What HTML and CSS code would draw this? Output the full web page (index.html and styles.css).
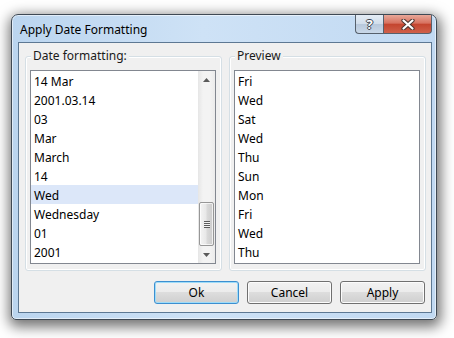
FILE: index.html
```html
<!DOCTYPE html>
<html lang="en">

<head>
    <meta charset="UTF-8">
    <meta name="viewport" content="width=device-width, initial-scale=1.0">
    <title>Apply Date Formatting</title>
    <link rel="stylesheet" href="styles.css">
</head>

<body>
    <div class="window">
        <div class="titlebar">
            <span class="title">Apply Date Formatting</span>
            <div class="caption-buttons">
                <div class="cap-btn help-btn">?</div>
                <div class="cap-btn close-btn">
                    <svg width="14" height="11" viewBox="0 0 14 11">
                        <path d="M2.5 1.5 L11.5 9.5 M11.5 1.5 L2.5 9.5" stroke="#4a3530" stroke-width="4.2" stroke-linecap="round" fill="none"/>
                        <path d="M2.5 1.5 L11.5 9.5 M11.5 1.5 L2.5 9.5" stroke="#ffffff" stroke-width="2.2" stroke-linecap="round" fill="none"/>
                    </svg>
                </div>
            </div>
        </div>

        <div class="client">
            <div class="groups">
                <fieldset class="group">
                    <legend>Date formatting:</legend>
                    <div class="listbox">
                        <ul class="rows">
                            <li>14 Mar</li>
                            <li>2001.03.14</li>
                            <li>03</li>
                            <li>Mar</li>
                            <li>March</li>
                            <li>14</li>
                            <li class="selected">Wed</li>
                            <li>Wednesday</li>
                            <li>01</li>
                            <li>2001</li>
                        </ul>
                        <div class="scrollbar">
                            <div class="arrow">
                                <svg width="7" height="4" viewBox="0 0 7 4"><path d="M0 4 L3.5 0 L7 4 Z" fill="#5a5a5a"/></svg>
                            </div>
                            <div class="track">
                                <div class="thumb">
                                    <div class="grip"></div>
                                </div>
                            </div>
                            <div class="arrow">
                                <svg width="7" height="4" viewBox="0 0 7 4"><path d="M0 0 L7 0 L3.5 4 Z" fill="#5a5a5a"/></svg>
                            </div>
                        </div>
                    </div>
                </fieldset>

                <fieldset class="group">
                    <legend>Preview</legend>
                    <div class="listbox">
                        <ul class="rows">
                            <li>Fri</li>
                            <li>Wed</li>
                            <li>Sat</li>
                            <li>Wed</li>
                            <li>Thu</li>
                            <li>Sun</li>
                            <li>Mon</li>
                            <li>Fri</li>
                            <li>Wed</li>
                            <li>Thu</li>
                        </ul>
                    </div>
                </fieldset>
            </div>

            <div class="buttons">
                <button type="button" class="default-btn">Ok</button>
                <button type="button">Cancel</button>
                <button type="button">Apply</button>
            </div>
        </div>
    </div>
</body>

</html>
```

FILE: styles.css
```css
html {
    height: 100%;
}

body {
    margin: 0;
    min-height: 100%;
    box-sizing: border-box;
    padding: 14px 0 0 11px;
    background: #fff;
    font-family: "Noto Sans", "Open Sans", sans-serif;
    font-size: 12px;
    color: #000;
}

.window {
    width: 426px;
    box-sizing: border-box;
    border: 1px solid #3f4954;
    border-radius: 7px 7px 5px 5px;
    background: linear-gradient(to right, #bbd5ef, #cee2f6 45%, #c1d9f2);
    box-shadow: 1px 4px 13px 3px rgba(0, 0, 0, 0.55), inset 0 0 0 1px rgba(255, 255, 255, 0.55);
}

.titlebar {
    height: 27px;
    display: flex;
    justify-content: space-between;
    align-items: flex-start;
}

.title {
    padding: 6px 0 0 8px;
    line-height: 17px;
    font-size: 12px;
}

.caption-buttons {
    display: flex;
    margin-right: 4px;
}

.cap-btn {
    height: 19px;
    box-sizing: border-box;
    border: 1px solid #56606c;
    border-top: none;
    display: flex;
    align-items: center;
    justify-content: center;
}

.help-btn {
    width: 28px;
    border-right: none;
    border-radius: 0 0 0 4px;
    background: linear-gradient(to bottom, #e4ecf5, #d2deeb 48%, #b8c8db 52%, #c9d8e8);
    color: #fff;
    font-weight: bold;
    font-size: 13px;
    line-height: 13px;
    text-shadow: 1px 0 0 #3c4652, -1px 0 0 #3c4652, 0 1px 0 #3c4652, 0 -1px 0 #3c4652;
}

.close-btn {
    width: 49px;
    border-radius: 0 0 4px 0;
    background: linear-gradient(to bottom, #e8a899, #d7715f 45%, #c4452f 52%, #d0604a);
}

.close-btn svg {
    display: block;
}

.client {
    margin: 0 4px 6px 6px;
    padding: 5px 5px 8px 6px;
    border: 1px solid #5d7893;
    background: #f0f0f0;
}

.groups {
    display: flex;
    gap: 7px;
}

.group {
    width: 197px;
    box-sizing: border-box;
    min-width: 0;
    margin: 0;
    padding: 6px 5px 6px 4px;
    border: 1px solid #d5dfe5;
    border-radius: 3px;
    box-shadow: inset 0 0 0 1px #fff;
}

.group legend {
    margin-left: 1px;
    padding: 0 2px;
    font-size: 12px;
    line-height: 16px;
    background: #f0f0f0;
    color: #1a1a1a;
}

.listbox {
    height: 194px;
    box-sizing: border-box;
    border: 1px solid #828790;
    background: #fff;
    display: flex;
    overflow: hidden;
}

.rows {
    flex: 1;
    list-style: none;
    margin: 0;
    padding: 0;
}

.rows li {
    height: 19px;
    box-sizing: border-box;
    padding: 1px 0 0 3px;
    line-height: 19px;
    white-space: nowrap;
}

.rows li.selected {
    background: #dce7f9;
}

.scrollbar {
    width: 17px;
    display: flex;
    flex-direction: column;
    background: linear-gradient(to right, #e6e6e6, #f3f3f3 30%, #f3f3f3 70%, #ebebeb);
}

.arrow {
    height: 17px;
    display: flex;
    align-items: center;
    justify-content: center;
}

.arrow svg {
    display: block;
}

.track {
    flex: 1;
    display: flex;
    flex-direction: column;
    justify-content: flex-end;
}

.thumb {
    height: 44px;
    margin: 0 1px;
    box-sizing: border-box;
    border: 1px solid #979797;
    border-radius: 2px;
    background: linear-gradient(to right, #f4f4f4, #e8e8e8 45%, #d9d9d9 55%, #cbcbcb);
    box-shadow: inset 0 0 0 1px rgba(255, 255, 255, 0.7);
    display: flex;
    align-items: center;
    justify-content: center;
}

.grip {
    width: 6px;
    height: 7px;
    background: repeating-linear-gradient(to bottom, #5c5c5c 0, #5c5c5c 1px, #f2f2f2 1px, #f2f2f2 2px);
}

.buttons {
    display: flex;
    justify-content: flex-end;
    gap: 8px;
    margin-top: 10px;
    padding-right: 1px;
}

button {
    width: 85px;
    height: 23px;
    padding: 0;
    border: 1px solid #707070;
    border-radius: 3px;
    background: linear-gradient(to bottom, #f2f2f2, #ebebeb 50%, #dddddd 50%, #cfcfcf);
    box-shadow: inset 0 0 0 1px #fcfcfc;
    font-family: "Noto Sans", "Open Sans", sans-serif;
    font-size: 12px;
    color: #000;
}

.default-btn {
    border-color: #3c8fd0;
    box-shadow: inset 0 0 0 1px #9fdcf8;
}
```
